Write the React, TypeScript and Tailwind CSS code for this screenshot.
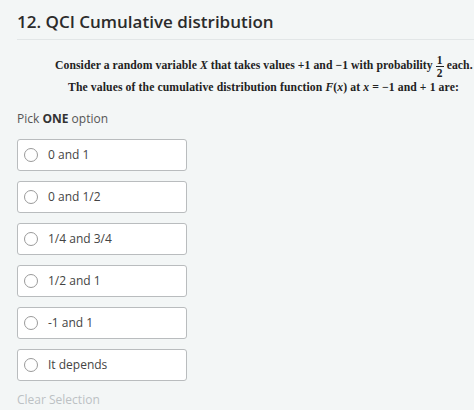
import React from "react";

const options = ["0 and 1", "0 and 1/2", "1/4 and 3/4", "1/2 and 1", "-1 and 1", "It depends"];

function Frac() {
  return (
    <span className="inline-flex flex-col items-center ml-[3px] mr-[3px] leading-[10px] text-[11.5px] align-middle">
      <span>1</span>
      <span className="w-[8px] h-[1px] bg-[#222] my-[1px]" />
      <span>2</span>
    </span>
  );
}

export default function App() {
  return (
    <div className="w-[474px] h-[410px] bg-[#f3f6f6] overflow-hidden font-['Open_Sans',sans-serif]">
      <div className="pl-[17px] pt-[10px]">
        <h1 className="text-[17px] font-semibold text-[#2b2b2b] leading-[24px]">12. QCI Cumulative distribution</h1>
        <div className="mt-[5px] h-px bg-[#e2e6e7]" />
        <div className="mt-[15px] flex flex-col items-start whitespace-nowrap font-['Liberation_Serif',serif] font-bold text-[11.7px] text-[#222]">
          <div className="ml-[38px] h-[22px] leading-[22px] tracking-[0.06px]">
            Consider a random variable <i>X</i> that takes values +1 and −1 with probability<Frac />each.
          </div>
          <div className="ml-[51px] h-[22px] leading-[22px] tracking-[0.1px]">
            The values of the cumulative distribution function <i>F</i>(<i>x</i>) at <i>x</i> = −1 and + 1 are:
          </div>
        </div>
        <div className="mt-[12px] text-[12px] text-[#555] leading-[16px]">
          Pick <span className="font-bold text-[#333]">ONE</span> option
        </div>
        <div className="mt-[12px] flex flex-col gap-[10px]">
          {options.map((o) => (
            <div key={o} className="w-[170px] h-[32px] bg-white border border-[#b9bcbe] rounded-[3px] flex items-center pl-[6px]">
              <span className="w-[14px] h-[14px] rounded-full border border-[#9a9a9a] bg-white" />
              <span className="ml-[10px] text-[12px] text-[#444]">{o}</span>
            </div>
          ))}
        </div>
        <div className="mt-[11px] text-[12px] leading-[16px] text-[#bcc1c4]">Clear Selection</div>
      </div>
    </div>
  );
}
